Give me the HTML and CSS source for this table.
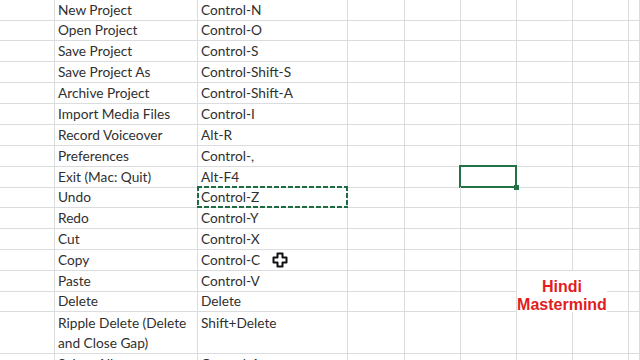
FILE: index.html
```html
<!DOCTYPE html>
<html lang="en">
<head>
<meta charset="utf-8">
<title>Shortcuts</title>
<link rel="stylesheet" href="styles.css">
</head>
<body>
<div class="sheet">
  <div class="row h20"><div class="c"></div><div class="c">New Project</div><div class="c">Control-N</div><div class="c"></div><div class="c"></div><div class="c"></div><div class="c"></div><div class="c"></div><div class="c"></div></div>
  <div class="row"><div class="c"></div><div class="c">Open Project</div><div class="c">Control-O</div><div class="c"></div><div class="c"></div><div class="c"></div><div class="c"></div><div class="c"></div><div class="c"></div></div>
  <div class="row"><div class="c"></div><div class="c">Save Project</div><div class="c">Control-S</div><div class="c"></div><div class="c"></div><div class="c"></div><div class="c"></div><div class="c"></div><div class="c"></div></div>
  <div class="row"><div class="c"></div><div class="c">Save Project As</div><div class="c">Control-Shift-S</div><div class="c"></div><div class="c"></div><div class="c"></div><div class="c"></div><div class="c"></div><div class="c"></div></div>
  <div class="row"><div class="c"></div><div class="c">Archive Project</div><div class="c">Control-Shift-A</div><div class="c"></div><div class="c"></div><div class="c"></div><div class="c"></div><div class="c"></div><div class="c"></div></div>
  <div class="row"><div class="c"></div><div class="c">Import Media Files</div><div class="c">Control-I</div><div class="c"></div><div class="c"></div><div class="c"></div><div class="c"></div><div class="c"></div><div class="c"></div></div>
  <div class="row"><div class="c"></div><div class="c">Record Voiceover</div><div class="c">Alt-R</div><div class="c"></div><div class="c"></div><div class="c"></div><div class="c"></div><div class="c"></div><div class="c"></div></div>
  <div class="row"><div class="c"></div><div class="c">Preferences</div><div class="c">Control-,</div><div class="c"></div><div class="c"></div><div class="c"></div><div class="c"></div><div class="c"></div><div class="c"></div></div>
  <div class="row h20"><div class="c"></div><div class="c">Exit (Mac: Quit)</div><div class="c">Alt-F4</div><div class="c"></div><div class="c"></div><div class="c active"></div><div class="c"></div><div class="c"></div><div class="c"></div></div>
  <div class="row"><div class="c"></div><div class="c">Undo</div><div class="c marquee">Control-Z</div><div class="c"></div><div class="c"></div><div class="c"></div><div class="c"></div><div class="c"></div><div class="c"></div></div>
  <div class="row"><div class="c"></div><div class="c">Redo</div><div class="c">Control-Y</div><div class="c"></div><div class="c"></div><div class="c"></div><div class="c"></div><div class="c"></div><div class="c"></div></div>
  <div class="row"><div class="c"></div><div class="c">Cut</div><div class="c">Control-X</div><div class="c"></div><div class="c"></div><div class="c"></div><div class="c"></div><div class="c"></div><div class="c"></div></div>
  <div class="row"><div class="c"></div><div class="c">Copy</div><div class="c">Control-C</div><div class="c"></div><div class="c"></div><div class="c"></div><div class="c"></div><div class="c"></div><div class="c"></div></div>
  <div class="row h20"><div class="c"></div><div class="c">Paste</div><div class="c">Control-V</div><div class="c"></div><div class="c"></div><div class="c"></div><div class="c"></div><div class="c"></div><div class="c"></div></div>
  <div class="row"><div class="c"></div><div class="c">Delete</div><div class="c">Delete</div><div class="c"></div><div class="c"></div><div class="c"></div><div class="c"></div><div class="c"></div><div class="c"></div></div>
  <div class="row tall"><div class="c"></div><div class="c">Ripple Delete (Delete and Close Gap)</div><div class="c">Shift+Delete</div><div class="c"></div><div class="c"></div><div class="c"></div><div class="c"></div><div class="c"></div><div class="c"></div></div>
  <div class="row"><div class="c"></div><div class="c">Select All</div><div class="c">Control-A</div><div class="c"></div><div class="c"></div><div class="c"></div><div class="c"></div><div class="c"></div><div class="c"></div></div>

  <div class="watermark">Hindi<br>Mastermind</div>
  <svg class="cursor" width="16" height="16" viewBox="0 0 16 16" aria-hidden="true">
    <path d="M5.5 1.5 H10.5 V5.5 H14.5 V10.5 H10.5 V14.5 H5.5 V10.5 H1.5 V5.5 H5.5 Z" fill="#fff" stroke="#111" stroke-width="2" stroke-linejoin="round"/>
  </svg>
</div>
</body>
</html>
```

FILE: styles.css
```css
html, body {
  margin: 0;
  padding: 0;
  background: #fff;
  overflow: hidden;
}

.sheet {
  position: relative;
  width: 640px;
  height: 360px;
  overflow: hidden;
  font-family: Lato, "Open Sans", sans-serif;
  font-size: 13.7px;
  color: #303030;
}

.row {
  display: grid;
  grid-template-columns: 55px 143px 150px 57px 56px 56px 56px 56px 1fr;
  height: 21px;
}

.row.h20 { height: 20px; }
.row.tall { height: 42px; }

.c {
  box-sizing: border-box;
  position: relative;
  border-right: 1px solid #dadcdd;
  border-bottom: 1px solid #dadcdd;
  padding: 0 3px 0 3px;
  display: flex;
  align-items: flex-end;
  line-height: 20px;
  white-space: nowrap;
}

.tall .c {
  align-items: flex-start;
  white-space: normal;
  padding-top: 1px;
}

.marquee::after {
  content: "";
  position: absolute;
  left: -1px;
  top: -1px;
  right: -1px;
  bottom: -1px;
  background:
    repeating-linear-gradient(90deg, #1f6b43 0 5px, transparent 5px 7px) top left / 100% 2px no-repeat,
    repeating-linear-gradient(90deg, #1f6b43 0 5px, transparent 5px 7px) bottom left / 100% 2px no-repeat,
    repeating-linear-gradient(180deg, #1f6b43 0 5px, transparent 5px 7px) top left / 2px 100% no-repeat,
    repeating-linear-gradient(180deg, #1f6b43 0 5px, transparent 5px 7px) top right / 2px 100% no-repeat;
}

.active::after {
  content: "";
  position: absolute;
  left: -2px;
  top: -2px;
  right: -1px;
  bottom: -1px;
  border: 2px solid #217346;
}

.active::before {
  content: "";
  position: absolute;
  right: -3px;
  bottom: -3px;
  width: 5px;
  height: 5px;
  background: #217346;
  z-index: 1;
}

.watermark {
  position: absolute;
  left: 517px;
  top: 271px;
  width: 90px;
  height: 41px;
  background: #fff;
  color: #e11d1d;
  font-family: "Liberation Sans", Arial, sans-serif;
  font-weight: bold;
  font-size: 16px;
  line-height: 18px;
  text-align: center;
  padding-top: 7px;
  box-sizing: border-box;
}

.cursor {
  position: absolute;
  left: 272px;
  top: 252px;
}
```
